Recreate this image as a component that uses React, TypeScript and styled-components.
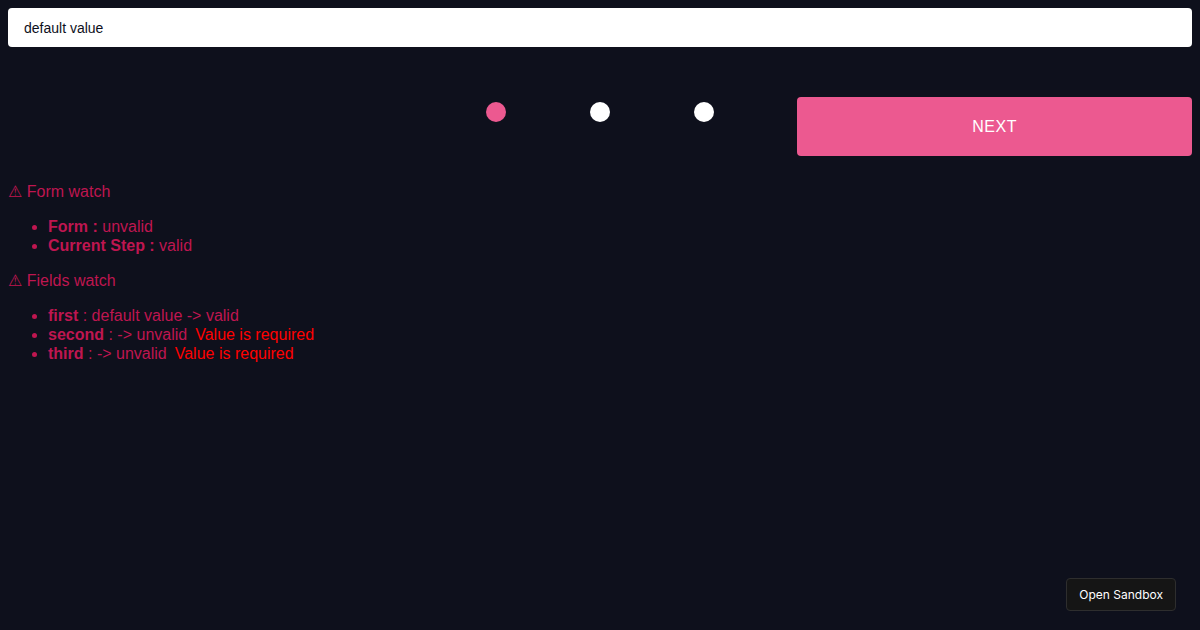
import React from 'react';
import styled, { createGlobalStyle } from 'styled-components';

const GlobalStyle = createGlobalStyle`
  html, body {
    margin: 0;
    padding: 0;
    background: #0e101c;
  }
  body {
    font-family: "Liberation Sans", Arial, "DejaVu Sans", sans-serif;
    font-size: 16px;
  }
`

const Page = styled.div`
  padding: 8px;
  min-height: 630px;
  box-sizing: border-box;
`

const TextInput = styled.input`
  display: block;
  width: 100%;
  height: 39px;
  box-sizing: border-box;
  padding: 0 16px;
  border: none;
  border-radius: 4px;
  background: #ffffff;
  color: #0e101c;
  font-family: "Liberation Sans", Arial, sans-serif;
  font-size: 14px;
  outline: none;
`

const StepRow = styled.div`
  display: grid;
  grid-template-columns: repeat(3, 1fr);
  align-items: start;
  margin-top: 50px;
`

const Steps = styled.div`
  grid-column: 2;
  display: flex;
  justify-content: space-evenly;
  padding-top: 5px;
`

const StepDot = styled.span<{ $active?: boolean }>`
  width: 20px;
  height: 20px;
  border-radius: 50%;
  background: ${({ $active }) => ($active ? '#ec5990' : '#ffffff')};
`

const NextButton = styled.button`
  grid-column: 3;
  height: 59px;
  border: none;
  border-radius: 4px;
  background: #ec5990;
  color: #ffffff;
  font-family: "Liberation Sans", Arial, sans-serif;
  font-size: 16px;
  font-weight: 100;
  letter-spacing: 0.5px;
  text-transform: uppercase;
  cursor: pointer;
`

const Watch = styled.section`
  padding-top: 10px;
  color: #bf1650;
`

const WatchTitle = styled.p`
  margin: 16px 0;
  line-height: 19px;
`

const WatchList = styled.ul`
  margin: 16px 0;
  padding-left: 40px;
  line-height: 19px;
`

const Label = styled.b`
  font-weight: bold;
`

const ErrorText = styled.span`
  margin-left: 8px;
  color: #ff0000;
`

const SandboxButton = styled.button`
  position: fixed;
  right: 24px;
  bottom: 19px;
  height: 33px;
  padding: 0 12px;
  border: 1px solid #2e2e2e;
  border-radius: 4px;
  background: #151515;
  color: #ffffff;
  font-family: Inter, "Liberation Sans", sans-serif;
  font-size: 12px;
  cursor: pointer;
`

const fields = [
  { name: 'first', value: 'default value', valid: true },
  { name: 'second', value: '', valid: false },
  { name: 'third', value: '', valid: false },
];

const App: React.FunctionComponent = () => {
  return (
    <Page>
      <GlobalStyle />
      <TextInput defaultValue="default value" />
      <StepRow>
        <Steps>
          <StepDot $active />
          <StepDot />
          <StepDot />
        </Steps>
        <NextButton type="button">Next</NextButton>
      </StepRow>
      <Watch>
        <WatchTitle>⚠ Form watch</WatchTitle>
        <WatchList>
          <li><Label>Form :</Label> unvalid</li>
          <li><Label>Current Step :</Label> valid</li>
        </WatchList>
        <WatchTitle>⚠ Fields watch</WatchTitle>
        <WatchList>
          {fields.map((f) => (
            <li key={f.name}>
              <Label>{f.name}</Label> : {f.value ? `${f.value} ` : ''}-&gt; {f.valid ? 'valid' : 'unvalid'}
              {!f.valid && <ErrorText>Value is required</ErrorText>}
            </li>
          ))}
        </WatchList>
      </Watch>
      <SandboxButton type="button">Open Sandbox</SandboxButton>
    </Page>
  );
}

export default App;
